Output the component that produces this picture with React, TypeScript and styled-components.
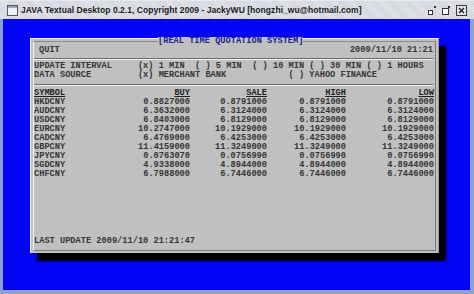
import React from 'react'
import styled, { createGlobalStyle } from 'styled-components'

const GlobalStyle = createGlobalStyle`
  html, body {
    margin: 0;
    padding: 0;
    background: #8f9fcf;
  }
  #root {
    width: 474px;
    height: 294px;
  }
`

const Window = styled.div`
  width: 474px;
  height: 294px;
  box-sizing: border-box;
  display: flex;
  flex-direction: column;
  background: #8f9fcf;
  padding: 0 4px 4px 3px;
`
const TitleBar = styled.div`
  height: 19px;
  margin: 0 -4px 0 -3px;
  display: flex;
  align-items: center;
  padding-left: 7px;
  background-color: #d2d5dd;
  background-image: repeating-linear-gradient(45deg, rgba(255, 255, 255, 0.35) 0 1px, transparent 1px 2px);
  border-top: 1px solid #e6e8ee;
  box-sizing: border-box;
`
const TitleText = styled.span`
  margin-left: 3px;
  font-family: 'Liberation Sans', Arial, sans-serif;
  font-weight: bold;
  font-size: 8.5px;
  letter-spacing: 0.05px;
  color: #1c1c1c;
  white-space: nowrap;
  flex: 1;
`
const TitleButtons = styled.div`
  display: flex;
  align-items: center;
  gap: 5px;
  padding-right: 7px;
`
const Desktop = styled.div`
  flex: 1;
  background: #0303f6;
  padding: 19px 0 0 27px;
`
const Panel = styled.div`
  width: 409px;
  height: 215px;
  box-sizing: border-box;
  background: #c0c0c0;
  border-top: 1px solid #efefef;
  border-left: 1px solid #efefef;
  border-right: 1px solid #9a9a9a;
  padding: 2px;
  box-shadow: 7px 8px 2px #000;
`
const Inner = styled.div`
  height: 100%;
  box-sizing: border-box;
  display: flex;
  flex-direction: column;
  border: 1px solid #7a7a7a;
  border-top-color: #8a8a8a;
  border-left-color: #f2f2f2;
  padding: 0 2px 4px 0;
  font-family: 'Liberation Mono', 'Courier New', monospace;
  font-weight: bold;
  font-size: 8.67px;
  line-height: 9px;
  color: #363636;
  white-space: pre;
`
const PanelTitle = styled.div`
  margin: -5px 0 0 124px;
  height: 9px;
  align-self: flex-start;
  background: #c0c0c0;
  color: #22228c;
`
const Row = styled.div`
  display: flex;
  justify-content: space-between;
  height: 9px;
`
const Indent = styled.span`
  padding-left: 5px;
`
const Separator = styled.div<{ top: number }>`
  margin-top: ${({ top }) => top}px;
  border-top: 1px solid #6e6e6e;
  border-bottom: 1px solid #ececec;
`
const Quotes = styled.div`
  margin-top: 3px;
  display: grid;
  grid-template-columns: 80px 76px 77px 79px 88px;
  grid-auto-rows: 9px;
`
const Head = styled.span<{ right?: boolean }>`
  text-align: ${({ right }) => (right ? 'right' : 'left')};
  text-decoration: underline;
  text-underline-offset: 1px;
  color: #1e1e1e;
`
const Cell = styled.span<{ right?: boolean }>`
  text-align: ${({ right }) => (right ? 'right' : 'left')};
`
const Footer = styled.div`
  margin-top: auto;
  height: 9px;
`

const rates = [
  ['HKDCNY', '0.8827000', '0.8791000', '0.8791000', '0.8791000'],
  ['AUDCNY', '6.3632000', '6.3124000', '6.3124000', '6.3124000'],
  ['USDCNY', '6.8403000', '6.8129000', '6.8129000', '6.8129000'],
  ['EURCNY', '10.2747000', '10.1929000', '10.1929000', '10.1929000'],
  ['CADCNY', '6.4769000', '6.4253000', '6.4253000', '6.4253000'],
  ['GBPCNY', '11.4159000', '11.3249000', '11.3249000', '11.3249000'],
  ['JPYCNY', '0.0763070', '0.0756990', '0.0756990', '0.0756990'],
  ['SGDCNY', '4.9338000', '4.8944000', '4.8944000', '4.8944000'],
  ['CHFCNY', '6.7988000', '6.7446000', '6.7446000', '6.7446000'],
]

const FrameIcon = () => (
  <svg width="11" height="11" viewBox="0 0 11 11">
    <rect x="0.5" y="0.5" width="10" height="10" fill="#eef0f4" stroke="#555b66" />
    <rect x="1" y="1" width="9" height="2" fill="#9aa4b8" />
  </svg>
)

const IconifyIcon = () => (
  <svg width="9" height="9" viewBox="0 0 9 9">
    <rect x="0.5" y="4.5" width="4" height="4" fill="#fff" stroke="#333" />
    <rect x="6" y="0" width="2" height="2" fill="#333" />
  </svg>
)

const MaximizeIcon = () => (
  <svg width="9" height="9" viewBox="0 0 9 9">
    <rect x="0.5" y="2.5" width="6" height="6" fill="#fff" stroke="#333" />
    <rect x="6" y="0" width="2" height="2" fill="#333" />
  </svg>
)

const CloseIcon = () => (
  <svg width="11" height="11" viewBox="0 0 11 11">
    <rect x="0.5" y="0.5" width="10" height="10" fill="#e4e6ec" stroke="#3a3a3a" />
    <path d="M3 3 L8 8 M8 3 L3 8" stroke="#222" strokeWidth="1.4" />
  </svg>
)

export default function App() {
  return (
    <>
      <GlobalStyle />
      <Window>
        <TitleBar>
          <FrameIcon />
          <TitleText>JAVA Textual Desktop 0.2.1, Copyright 2009 - JackyWU [hongzhi_wu@hotmail.com]</TitleText>
          <TitleButtons>
            <IconifyIcon />
            <MaximizeIcon />
            <CloseIcon />
          </TitleButtons>
        </TitleBar>
        <Desktop>
          <Panel>
            <Inner>
              <PanelTitle>[REAL TIME QUOTATION SYSTEM]</PanelTitle>
              <Row>
                <Indent>QUIT</Indent>
                <span>2009/11/10 21:21</span>
              </Row>
              <Separator top={3} />
              <Row style={{ marginTop: 2 }}>
                <span>UPDATE INTERVAL     (x) 1 MIN  ( ) 5 MIN  ( ) 10 MIN ( ) 30 MIN ( ) 1 HOURS</span>
              </Row>
              <Row>
                <span>DATA SOURCE         (x) MERCHANT BANK            ( ) YAHOO FINANCE</span>
              </Row>
              <Separator top={4} />
              <Quotes>
                <Head>SYMBOL</Head>
                <Head right>BUY</Head>
                <Head right>SALE</Head>
                <Head right>HIGH</Head>
                <Head right>LOW</Head>
                {rates.map((r) =>
                  r.map((v, i) => (
                    <Cell key={r[0] + i} right={i > 0}>
                      {v}
                    </Cell>
                  )),
                )}
              </Quotes>
              <Footer>LAST UPDATE 2009/11/10 21:21:47</Footer>
            </Inner>
          </Panel>
        </Desktop>
      </Window>
    </>
  )
}
